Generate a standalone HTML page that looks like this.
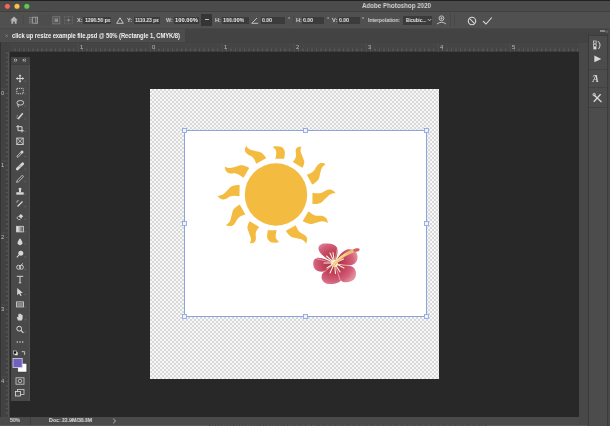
<!DOCTYPE html>
<html><head><meta charset="utf-8"><style>
*{margin:0;padding:0;box-sizing:border-box}
html,body{width:610px;height:426px;overflow:hidden;background:#282828;font-family:"Liberation Sans",sans-serif;position:relative}
.a{position:absolute}
.t{position:absolute;white-space:nowrap;line-height:1;color:#dcdcdc;transform-origin:0 0;will-change:transform}
.f{position:absolute;background:#3d3d3d;height:7px;top:16.5px}
svg{position:absolute;overflow:visible}
#w{position:absolute;left:0;top:0;width:610px;height:426px;overflow:hidden}</style></head><body><div id="w">
<div class="a" style="left:0px;top:0px;width:610px;height:426px;background:#282828;"></div>
<div class="a" style="left:0px;top:0px;width:610px;height:1px;background:#222222;"></div>
<div class="a" style="left:0px;top:1px;width:610px;height:10px;background:#4b4b4b;"></div>
<div class="a" style="left:0px;top:11px;width:610px;height:1px;background:#404040;"></div>
<div class="a" style="left:0px;top:12px;width:610px;height:16px;background:#505050;"></div>
<div class="a" style="left:0px;top:28px;width:610px;height:1px;background:#484848;"></div>
<div class="a" style="left:0px;top:29px;width:610px;height:13px;background:#434343;"></div>
<div class="a" style="left:0px;top:29px;width:185px;height:13px;background:#4d4d4d;"></div>
<div class="a" style="left:0px;top:42px;width:610px;height:1px;background:#424242;"></div>
<div class="a" style="left:10px;top:43px;width:569px;height:9px;background:#454545;"></div>
<div class="a" style="left:0px;top:43px;width:10px;height:374px;background:#424242;"></div>
<div class="a" style="left:8px;top:52px;width:1.2px;height:365px;background:#545454;"></div>
<div class="a" style="left:0px;top:42px;width:1px;height:384px;background:#333333;"></div>
<div class="a" style="left:9px;top:52px;width:1px;height:365px;background:#3c3c3c;"></div>
<div class="a" style="left:10px;top:51px;width:569px;height:1px;background:#3c3c3c;"></div>
<div class="a" style="left:0px;top:417px;width:588px;height:8px;background:#4a4a4a;"></div>
<div class="a" style="left:0px;top:424.5px;width:610px;height:1.5px;background:#575757;"></div>
<div class="a" style="left:209px;top:424.8px;width:278px;height:1.2px;background:#575757;background:repeating-linear-gradient(90deg,#3a3a3a 0 1px,#575757 1px 2.5px,#454545 2.5px 3.5px,#575757 3.5px 6px);opacity:.9"></div>
<div class="a" style="left:579px;top:43px;width:9px;height:382px;background:#484848;"></div>
<div class="a" style="left:588px;top:34px;width:1px;height:392px;background:#3a3a3a;"></div>
<div class="a" style="left:589px;top:35px;width:18px;height:391px;background:#4c4c4c;"></div>
<div class="a" style="left:607px;top:34px;width:1px;height:392px;background:#3c3c3c;"></div>
<div class="a" style="left:608px;top:29px;width:2px;height:397px;background:#484848;"></div>
<svg style="left:0;top:0" width="40" height="12"><circle cx="7.4" cy="6.3" r="2.9" fill="#ee6a5c" stroke="#3e3434" stroke-width="0.5"/><circle cx="17" cy="6.3" r="2.9" fill="#f5c34f" stroke="#3e3a30" stroke-width="0.5"/><circle cx="26.8" cy="6.3" r="2.9" fill="#63c656" stroke="#30402f" stroke-width="0.5"/></svg>
<div class="t" style="left:362px;top:2.8px;font-size:6.6px;color:#d2d2d2;font-weight:bold;transform:scale(0.942,1.0);">Adobe Photoshop 2020</div>
<svg style="left:9px;top:15px" width="10" height="10" viewBox="0 0 10 10"><path d="M1.2,5.2 L5,1.5 L8.8,5.2 H7.6 V8.8 H5.8 V6.4 H4.2 V8.8 H2.4 V5.2 Z" fill="#b4b4b4"/></svg>
<div class="a" style="left:23px;top:15px;width:1px;height:10px;background:#4a4a4a;"></div>
<svg style="left:29px;top:16px" width="10" height="9" viewBox="0 0 10 9"><path d="M0.8,1 V7.5 M2.2,1 V7.5" stroke="#a8a8a8" stroke-width="0.7" stroke-dasharray="1 0.8"/><rect x="3.6" y="1.2" width="5" height="6" fill="none" stroke="#a8a8a8" stroke-width="0.8"/><path d="M6.8,1.2 V7.2" stroke="#a8a8a8" stroke-width="0.8"/></svg>
<div class="a" style="left:38px;top:14px;width:14px;height:12px;background:#4d4d4d;"></div>
<svg style="left:52px;top:16px" width="24" height="9" viewBox="0 0 24 9"><rect x="0.8" y="0.8" width="7" height="7" fill="none" stroke="#7e7e7e" stroke-width="0.8"/><rect x="2.5" y="2.5" width="3.6" height="3.6" fill="#8c8c8c"/><path d="M12.5,0.6 H20.5 M12.5,4.2 H20.5 M12.5,7.8 H20.5 M12.5,0.6 V7.8 M16.5,0.6 V7.8 M20.5,0.6 V7.8" stroke="#747474" stroke-width="0.7" stroke-dasharray="1 0.9"/><rect x="15.6" y="3.3" width="1.8" height="1.8" fill="#9a9a9a"/></svg>
<div class="t" style="left:77px;top:17.9px;font-size:5.6px;color:#d0d0d0;font-weight:bold;transform:scale(0.95,1.0);">X:</div>
<div class="a" style="left:83px;top:16.5px;width:28px;height:7px;background:#3b3b3b;"></div>
<div class="t" style="left:84.5px;top:17.7px;font-size:5.8px;color:#eeeeee;font-weight:bold;transform:scale(0.87,1.0);">1290.50 px</div>
<svg style="left:116px;top:16.5px" width="8" height="7" viewBox="0 0 8 7"><path d="M4,0.8 L7.3,6.3 H0.7 Z" fill="none" stroke="#cfcfcf" stroke-width="0.9"/></svg>
<div class="t" style="left:127px;top:17.9px;font-size:5.6px;color:#d0d0d0;font-weight:bold;transform:scale(0.95,1.0);">Y:</div>
<div class="a" style="left:134px;top:16.5px;width:26px;height:7px;background:#3b3b3b;"></div>
<div class="t" style="left:135.3px;top:17.7px;font-size:5.8px;color:#eeeeee;font-weight:bold;transform:scale(0.83,1.0);">1110.23 px</div>
<div class="t" style="left:166px;top:17.9px;font-size:5.6px;color:#d0d0d0;font-weight:bold;transform:scale(0.92,1.0);">W:</div>
<div class="a" style="left:174px;top:16.5px;width:25px;height:7px;background:#3b3b3b;"></div>
<div class="t" style="left:175px;top:17.7px;font-size:5.8px;color:#eeeeee;font-weight:bold;">100.00%</div>
<div class="a" style="left:201px;top:14px;width:11px;height:11.5px;background:#353535;"></div>
<div class="a" style="left:204.5px;top:19.3px;width:4.5px;height:1px;background:#bdbdbd;"></div>
<div class="t" style="left:214.5px;top:17.9px;font-size:5.6px;color:#d0d0d0;font-weight:bold;transform:scale(0.95,1.0);">H:</div>
<div class="a" style="left:222px;top:16.5px;width:27px;height:7px;background:#3b3b3b;"></div>
<div class="t" style="left:223px;top:17.7px;font-size:5.8px;color:#eeeeee;font-weight:bold;transform:scale(0.93,1.0);">100.00%</div>
<svg style="left:251px;top:16.5px" width="8" height="7" viewBox="0 0 8 7"><path d="M0.8,6.3 H7.2 M0.8,6.3 L6,1" fill="none" stroke="#cfcfcf" stroke-width="0.9"/></svg>
<div class="a" style="left:261px;top:16.5px;width:24px;height:7px;background:#3b3b3b;"></div>
<div class="t" style="left:262px;top:17.7px;font-size:5.8px;color:#eeeeee;font-weight:bold;transform:scale(0.885,1.0);">0.00</div>
<div class="t" style="left:287.5px;top:16.8px;font-size:5.6px;color:#cfcfcf;font-weight:normal;">°</div>
<div class="a" style="left:293px;top:15px;width:1px;height:10px;background:#474747;"></div>
<div class="t" style="left:296px;top:17.9px;font-size:5.6px;color:#d0d0d0;font-weight:bold;transform:scale(0.95,1.0);">H:</div>
<div class="a" style="left:302px;top:16.5px;width:22px;height:7px;background:#3b3b3b;"></div>
<div class="t" style="left:303px;top:17.7px;font-size:5.8px;color:#eeeeee;font-weight:bold;transform:scale(0.885,1.0);">0.00</div>
<div class="t" style="left:326.5px;top:16.8px;font-size:5.6px;color:#cfcfcf;font-weight:normal;">°</div>
<div class="t" style="left:332px;top:17.9px;font-size:5.6px;color:#d0d0d0;font-weight:bold;transform:scale(0.95,1.0);">V:</div>
<div class="a" style="left:338px;top:16.5px;width:22px;height:7px;background:#3b3b3b;"></div>
<div class="t" style="left:339px;top:17.7px;font-size:5.8px;color:#eeeeee;font-weight:bold;transform:scale(0.885,1.0);">0.00</div>
<div class="t" style="left:361.5px;top:16.8px;font-size:5.6px;color:#cfcfcf;font-weight:normal;">°</div>
<div class="t" style="left:368px;top:17.9px;font-size:5.8px;color:#d4d4d4;font-weight:bold;transform:scale(0.864,1.0);">Interpolation:</div>
<div class="a" style="left:403px;top:15.5px;width:29px;height:9px;background:#3b3b3b;"></div>
<div class="t" style="left:406px;top:17.9px;font-size:5.8px;color:#e4e4e4;font-weight:bold;transform:scale(0.78,1.0);">Bicubic...</div>
<svg style="left:427px;top:18px" width="5" height="4" viewBox="0 0 5 4"><path d="M0.8,1 L2.5,2.8 L4.2,1" fill="none" stroke="#cfcfcf" stroke-width="0.8"/></svg>
<svg style="left:436px;top:15px" width="11" height="10" viewBox="0 0 11 10"><circle cx="5.5" cy="3.3" r="2.4" fill="none" stroke="#cfcfcf" stroke-width="0.9"/><path d="M4.2,3.3 H6.8 M5.5,2 V4.6" stroke="#cfcfcf" stroke-width="0.7"/><path d="M1,9 Q5.5,5.5 10,9" fill="none" stroke="#cfcfcf" stroke-width="0.9"/></svg>
<div class="a" style="left:450px;top:14px;width:1px;height:12px;background:#474747;"></div>
<div class="a" style="left:454px;top:14px;width:1px;height:12px;background:#474747;"></div>
<svg style="left:467px;top:15.5px" width="10" height="10" viewBox="0 0 10 10"><circle cx="5" cy="5" r="3.7" fill="none" stroke="#d8d8d8" stroke-width="1.1"/><path d="M2.4,2.4 L7.6,7.6" stroke="#d8d8d8" stroke-width="1.1"/></svg>
<svg style="left:482px;top:15.5px" width="11" height="10" viewBox="0 0 11 10"><path d="M1,5.2 L4,8 L9.8,1.5" fill="none" stroke="#d8d8d8" stroke-width="1.1"/></svg>
<svg style="left:3.5px;top:33px" width="6" height="6" viewBox="0 0 6 6"><path d="M1.5,1.5 L3.8,3.8 M3.8,1.5 L1.5,3.8" stroke="#8c8c8c" stroke-width="0.7"/></svg>
<div class="t" style="left:12px;top:32.9px;font-size:5.9px;color:#eeeeee;font-weight:bold;transform:scale(1.0,1.17);letter-spacing:-0.08px;">click up resize example file.psd @ 50% (Rectangle 1, CMYK/8)</div>
<svg style="left:0;top:0" width="610" height="426"><rect x="14.5" y="48.6" width="1" height="2.6" fill="#606060"/><rect x="19.0" y="48.6" width="1" height="2.6" fill="#5a5a5a"/><rect x="23.5" y="48.6" width="1" height="2.6" fill="#606060"/><rect x="28.0" y="48.6" width="1" height="2.6" fill="#5a5a5a"/><rect x="32.5" y="48.6" width="1" height="2.6" fill="#606060"/><rect x="37.0" y="48.6" width="1" height="2.6" fill="#5a5a5a"/><rect x="41.5" y="48.6" width="1" height="2.6" fill="#606060"/><rect x="46.0" y="48.6" width="1" height="2.6" fill="#5a5a5a"/><rect x="50.5" y="48.6" width="1" height="2.6" fill="#606060"/><rect x="55.0" y="48.6" width="1" height="2.6" fill="#5a5a5a"/><rect x="59.5" y="48.6" width="1" height="2.6" fill="#606060"/><rect x="64.0" y="48.6" width="1" height="2.6" fill="#5a5a5a"/><rect x="68.5" y="48.6" width="1" height="2.6" fill="#606060"/><rect x="73.0" y="48.6" width="1" height="2.6" fill="#5a5a5a"/><rect x="77.5" y="43" width="1" height="9" fill="#4e4e4e"/><rect x="82.0" y="48.6" width="1" height="2.6" fill="#5a5a5a"/><rect x="86.5" y="48.6" width="1" height="2.6" fill="#606060"/><rect x="91.0" y="48.6" width="1" height="2.6" fill="#5a5a5a"/><rect x="95.5" y="48.6" width="1" height="2.6" fill="#606060"/><rect x="100.0" y="48.6" width="1" height="2.6" fill="#5a5a5a"/><rect x="104.5" y="48.6" width="1" height="2.6" fill="#606060"/><rect x="109.0" y="48.6" width="1" height="2.6" fill="#5a5a5a"/><rect x="113.5" y="48.6" width="1" height="2.6" fill="#606060"/><rect x="118.0" y="48.6" width="1" height="2.6" fill="#5a5a5a"/><rect x="122.5" y="48.6" width="1" height="2.6" fill="#606060"/><rect x="127.0" y="48.6" width="1" height="2.6" fill="#5a5a5a"/><rect x="131.5" y="48.6" width="1" height="2.6" fill="#606060"/><rect x="136.0" y="48.6" width="1" height="2.6" fill="#5a5a5a"/><rect x="140.5" y="48.6" width="1" height="2.6" fill="#606060"/><rect x="145.0" y="48.6" width="1" height="2.6" fill="#5a5a5a"/><rect x="149.5" y="43" width="1" height="9" fill="#4e4e4e"/><rect x="154.0" y="48.6" width="1" height="2.6" fill="#5a5a5a"/><rect x="158.5" y="48.6" width="1" height="2.6" fill="#606060"/><rect x="163.0" y="48.6" width="1" height="2.6" fill="#5a5a5a"/><rect x="167.5" y="48.6" width="1" height="2.6" fill="#606060"/><rect x="172.0" y="48.6" width="1" height="2.6" fill="#5a5a5a"/><rect x="176.5" y="48.6" width="1" height="2.6" fill="#606060"/><rect x="181.0" y="48.6" width="1" height="2.6" fill="#5a5a5a"/><rect x="185.5" y="48.6" width="1" height="2.6" fill="#606060"/><rect x="190.0" y="48.6" width="1" height="2.6" fill="#5a5a5a"/><rect x="194.5" y="48.6" width="1" height="2.6" fill="#606060"/><rect x="199.0" y="48.6" width="1" height="2.6" fill="#5a5a5a"/><rect x="203.5" y="48.6" width="1" height="2.6" fill="#606060"/><rect x="208.0" y="48.6" width="1" height="2.6" fill="#5a5a5a"/><rect x="212.5" y="48.6" width="1" height="2.6" fill="#606060"/><rect x="217.0" y="48.6" width="1" height="2.6" fill="#5a5a5a"/><rect x="221.5" y="43" width="1" height="9" fill="#4e4e4e"/><rect x="226.0" y="48.6" width="1" height="2.6" fill="#5a5a5a"/><rect x="230.5" y="48.6" width="1" height="2.6" fill="#606060"/><rect x="235.0" y="48.6" width="1" height="2.6" fill="#5a5a5a"/><rect x="239.5" y="48.6" width="1" height="2.6" fill="#606060"/><rect x="244.0" y="48.6" width="1" height="2.6" fill="#5a5a5a"/><rect x="248.5" y="48.6" width="1" height="2.6" fill="#606060"/><rect x="253.0" y="48.6" width="1" height="2.6" fill="#5a5a5a"/><rect x="257.5" y="48.6" width="1" height="2.6" fill="#606060"/><rect x="262.0" y="48.6" width="1" height="2.6" fill="#5a5a5a"/><rect x="266.5" y="48.6" width="1" height="2.6" fill="#606060"/><rect x="271.0" y="48.6" width="1" height="2.6" fill="#5a5a5a"/><rect x="275.5" y="48.6" width="1" height="2.6" fill="#606060"/><rect x="280.0" y="48.6" width="1" height="2.6" fill="#5a5a5a"/><rect x="284.5" y="48.6" width="1" height="2.6" fill="#606060"/><rect x="289.0" y="48.6" width="1" height="2.6" fill="#5a5a5a"/><rect x="293.5" y="43" width="1" height="9" fill="#4e4e4e"/><rect x="298.0" y="48.6" width="1" height="2.6" fill="#5a5a5a"/><rect x="302.5" y="48.6" width="1" height="2.6" fill="#606060"/><rect x="307.0" y="48.6" width="1" height="2.6" fill="#5a5a5a"/><rect x="311.5" y="48.6" width="1" height="2.6" fill="#606060"/><rect x="316.0" y="48.6" width="1" height="2.6" fill="#5a5a5a"/><rect x="320.5" y="48.6" width="1" height="2.6" fill="#606060"/><rect x="325.0" y="48.6" width="1" height="2.6" fill="#5a5a5a"/><rect x="329.5" y="48.6" width="1" height="2.6" fill="#606060"/><rect x="334.0" y="48.6" width="1" height="2.6" fill="#5a5a5a"/><rect x="338.5" y="48.6" width="1" height="2.6" fill="#606060"/><rect x="343.0" y="48.6" width="1" height="2.6" fill="#5a5a5a"/><rect x="347.5" y="48.6" width="1" height="2.6" fill="#606060"/><rect x="352.0" y="48.6" width="1" height="2.6" fill="#5a5a5a"/><rect x="356.5" y="48.6" width="1" height="2.6" fill="#606060"/><rect x="361.0" y="48.6" width="1" height="2.6" fill="#5a5a5a"/><rect x="365.5" y="43" width="1" height="9" fill="#4e4e4e"/><rect x="370.0" y="48.6" width="1" height="2.6" fill="#5a5a5a"/><rect x="374.5" y="48.6" width="1" height="2.6" fill="#606060"/><rect x="379.0" y="48.6" width="1" height="2.6" fill="#5a5a5a"/><rect x="383.5" y="48.6" width="1" height="2.6" fill="#606060"/><rect x="388.0" y="48.6" width="1" height="2.6" fill="#5a5a5a"/><rect x="392.5" y="48.6" width="1" height="2.6" fill="#606060"/><rect x="397.0" y="48.6" width="1" height="2.6" fill="#5a5a5a"/><rect x="401.5" y="48.6" width="1" height="2.6" fill="#606060"/><rect x="406.0" y="48.6" width="1" height="2.6" fill="#5a5a5a"/><rect x="410.5" y="48.6" width="1" height="2.6" fill="#606060"/><rect x="415.0" y="48.6" width="1" height="2.6" fill="#5a5a5a"/><rect x="419.5" y="48.6" width="1" height="2.6" fill="#606060"/><rect x="424.0" y="48.6" width="1" height="2.6" fill="#5a5a5a"/><rect x="428.5" y="48.6" width="1" height="2.6" fill="#606060"/><rect x="433.0" y="48.6" width="1" height="2.6" fill="#5a5a5a"/><rect x="437.5" y="43" width="1" height="9" fill="#4e4e4e"/><rect x="442.0" y="48.6" width="1" height="2.6" fill="#5a5a5a"/><rect x="446.5" y="48.6" width="1" height="2.6" fill="#606060"/><rect x="451.0" y="48.6" width="1" height="2.6" fill="#5a5a5a"/><rect x="455.5" y="48.6" width="1" height="2.6" fill="#606060"/><rect x="460.0" y="48.6" width="1" height="2.6" fill="#5a5a5a"/><rect x="464.5" y="48.6" width="1" height="2.6" fill="#606060"/><rect x="469.0" y="48.6" width="1" height="2.6" fill="#5a5a5a"/><rect x="473.5" y="48.6" width="1" height="2.6" fill="#606060"/><rect x="478.0" y="48.6" width="1" height="2.6" fill="#5a5a5a"/><rect x="482.5" y="48.6" width="1" height="2.6" fill="#606060"/><rect x="487.0" y="48.6" width="1" height="2.6" fill="#5a5a5a"/><rect x="491.5" y="48.6" width="1" height="2.6" fill="#606060"/><rect x="496.0" y="48.6" width="1" height="2.6" fill="#5a5a5a"/><rect x="500.5" y="48.6" width="1" height="2.6" fill="#606060"/><rect x="505.0" y="48.6" width="1" height="2.6" fill="#5a5a5a"/><rect x="509.5" y="43" width="1" height="9" fill="#4e4e4e"/><rect x="514.0" y="48.6" width="1" height="2.6" fill="#5a5a5a"/><rect x="518.5" y="48.6" width="1" height="2.6" fill="#606060"/><rect x="523.0" y="48.6" width="1" height="2.6" fill="#5a5a5a"/><rect x="527.5" y="48.6" width="1" height="2.6" fill="#606060"/><rect x="532.0" y="48.6" width="1" height="2.6" fill="#5a5a5a"/><rect x="536.5" y="48.6" width="1" height="2.6" fill="#606060"/><rect x="541.0" y="48.6" width="1" height="2.6" fill="#5a5a5a"/><rect x="545.5" y="48.6" width="1" height="2.6" fill="#606060"/><rect x="550.0" y="48.6" width="1" height="2.6" fill="#5a5a5a"/><rect x="554.5" y="48.6" width="1" height="2.6" fill="#606060"/><rect x="559.0" y="48.6" width="1" height="2.6" fill="#5a5a5a"/><rect x="563.5" y="48.6" width="1" height="2.6" fill="#606060"/><rect x="568.0" y="48.6" width="1" height="2.6" fill="#5a5a5a"/><rect x="572.5" y="48.6" width="1" height="2.6" fill="#606060"/><rect x="577.0" y="48.6" width="1" height="2.6" fill="#5a5a5a"/><rect x="5.8" y="52.5" width="2.4" height="1" fill="#5c5c5c"/><rect x="5.8" y="57.0" width="2.4" height="1" fill="#565656"/><rect x="5.8" y="61.5" width="2.4" height="1" fill="#5c5c5c"/><rect x="5.8" y="66.0" width="2.4" height="1" fill="#565656"/><rect x="5.8" y="70.5" width="2.4" height="1" fill="#5c5c5c"/><rect x="5.8" y="75.0" width="2.4" height="1" fill="#565656"/><rect x="5.8" y="79.5" width="2.4" height="1" fill="#5c5c5c"/><rect x="5.8" y="84.0" width="2.4" height="1" fill="#565656"/><rect x="1" y="88.5" width="8" height="1" fill="#4e4e4e"/><rect x="5.8" y="93.0" width="2.4" height="1" fill="#565656"/><rect x="5.8" y="97.5" width="2.4" height="1" fill="#5c5c5c"/><rect x="5.8" y="102.0" width="2.4" height="1" fill="#565656"/><rect x="5.8" y="106.5" width="2.4" height="1" fill="#5c5c5c"/><rect x="5.8" y="111.0" width="2.4" height="1" fill="#565656"/><rect x="5.8" y="115.5" width="2.4" height="1" fill="#5c5c5c"/><rect x="5.8" y="120.0" width="2.4" height="1" fill="#565656"/><rect x="5.8" y="124.5" width="2.4" height="1" fill="#5c5c5c"/><rect x="5.8" y="129.0" width="2.4" height="1" fill="#565656"/><rect x="5.8" y="133.5" width="2.4" height="1" fill="#5c5c5c"/><rect x="5.8" y="138.0" width="2.4" height="1" fill="#565656"/><rect x="5.8" y="142.5" width="2.4" height="1" fill="#5c5c5c"/><rect x="5.8" y="147.0" width="2.4" height="1" fill="#565656"/><rect x="5.8" y="151.5" width="2.4" height="1" fill="#5c5c5c"/><rect x="5.8" y="156.0" width="2.4" height="1" fill="#565656"/><rect x="1" y="160.5" width="8" height="1" fill="#4e4e4e"/><rect x="5.8" y="165.0" width="2.4" height="1" fill="#565656"/><rect x="5.8" y="169.5" width="2.4" height="1" fill="#5c5c5c"/><rect x="5.8" y="174.0" width="2.4" height="1" fill="#565656"/><rect x="5.8" y="178.5" width="2.4" height="1" fill="#5c5c5c"/><rect x="5.8" y="183.0" width="2.4" height="1" fill="#565656"/><rect x="5.8" y="187.5" width="2.4" height="1" fill="#5c5c5c"/><rect x="5.8" y="192.0" width="2.4" height="1" fill="#565656"/><rect x="5.8" y="196.5" width="2.4" height="1" fill="#5c5c5c"/><rect x="5.8" y="201.0" width="2.4" height="1" fill="#565656"/><rect x="5.8" y="205.5" width="2.4" height="1" fill="#5c5c5c"/><rect x="5.8" y="210.0" width="2.4" height="1" fill="#565656"/><rect x="5.8" y="214.5" width="2.4" height="1" fill="#5c5c5c"/><rect x="5.8" y="219.0" width="2.4" height="1" fill="#565656"/><rect x="5.8" y="223.5" width="2.4" height="1" fill="#5c5c5c"/><rect x="5.8" y="228.0" width="2.4" height="1" fill="#565656"/><rect x="1" y="232.5" width="8" height="1" fill="#4e4e4e"/><rect x="5.8" y="237.0" width="2.4" height="1" fill="#565656"/><rect x="5.8" y="241.5" width="2.4" height="1" fill="#5c5c5c"/><rect x="5.8" y="246.0" width="2.4" height="1" fill="#565656"/><rect x="5.8" y="250.5" width="2.4" height="1" fill="#5c5c5c"/><rect x="5.8" y="255.0" width="2.4" height="1" fill="#565656"/><rect x="5.8" y="259.5" width="2.4" height="1" fill="#5c5c5c"/><rect x="5.8" y="264.0" width="2.4" height="1" fill="#565656"/><rect x="5.8" y="268.5" width="2.4" height="1" fill="#5c5c5c"/><rect x="5.8" y="273.0" width="2.4" height="1" fill="#565656"/><rect x="5.8" y="277.5" width="2.4" height="1" fill="#5c5c5c"/><rect x="5.8" y="282.0" width="2.4" height="1" fill="#565656"/><rect x="5.8" y="286.5" width="2.4" height="1" fill="#5c5c5c"/><rect x="5.8" y="291.0" width="2.4" height="1" fill="#565656"/><rect x="5.8" y="295.5" width="2.4" height="1" fill="#5c5c5c"/><rect x="5.8" y="300.0" width="2.4" height="1" fill="#565656"/><rect x="1" y="304.5" width="8" height="1" fill="#4e4e4e"/><rect x="5.8" y="309.0" width="2.4" height="1" fill="#565656"/><rect x="5.8" y="313.5" width="2.4" height="1" fill="#5c5c5c"/><rect x="5.8" y="318.0" width="2.4" height="1" fill="#565656"/><rect x="5.8" y="322.5" width="2.4" height="1" fill="#5c5c5c"/><rect x="5.8" y="327.0" width="2.4" height="1" fill="#565656"/><rect x="5.8" y="331.5" width="2.4" height="1" fill="#5c5c5c"/><rect x="5.8" y="336.0" width="2.4" height="1" fill="#565656"/><rect x="5.8" y="340.5" width="2.4" height="1" fill="#5c5c5c"/><rect x="5.8" y="345.0" width="2.4" height="1" fill="#565656"/><rect x="5.8" y="349.5" width="2.4" height="1" fill="#5c5c5c"/><rect x="5.8" y="354.0" width="2.4" height="1" fill="#565656"/><rect x="5.8" y="358.5" width="2.4" height="1" fill="#5c5c5c"/><rect x="5.8" y="363.0" width="2.4" height="1" fill="#565656"/><rect x="5.8" y="367.5" width="2.4" height="1" fill="#5c5c5c"/><rect x="5.8" y="372.0" width="2.4" height="1" fill="#565656"/><rect x="1" y="376.5" width="8" height="1" fill="#4e4e4e"/><rect x="5.8" y="381.0" width="2.4" height="1" fill="#565656"/><rect x="5.8" y="385.5" width="2.4" height="1" fill="#5c5c5c"/><rect x="5.8" y="390.0" width="2.4" height="1" fill="#565656"/><rect x="5.8" y="394.5" width="2.4" height="1" fill="#5c5c5c"/><rect x="5.8" y="399.0" width="2.4" height="1" fill="#565656"/><rect x="5.8" y="403.5" width="2.4" height="1" fill="#5c5c5c"/><rect x="5.8" y="408.0" width="2.4" height="1" fill="#565656"/><rect x="5.8" y="412.5" width="2.4" height="1" fill="#5c5c5c"/></svg>
<div class="t" style="left:79.5px;top:45px;font-size:5.8px;color:#bdbdbd;font-weight:normal;">1</div>
<div class="t" style="left:151.5px;top:45px;font-size:5.8px;color:#bdbdbd;font-weight:normal;">0</div>
<div class="t" style="left:223.5px;top:45px;font-size:5.8px;color:#bdbdbd;font-weight:normal;">1</div>
<div class="t" style="left:295.5px;top:45px;font-size:5.8px;color:#bdbdbd;font-weight:normal;">2</div>
<div class="t" style="left:367.5px;top:45px;font-size:5.8px;color:#bdbdbd;font-weight:normal;">3</div>
<div class="t" style="left:439.5px;top:45px;font-size:5.8px;color:#bdbdbd;font-weight:normal;">4</div>
<div class="t" style="left:511.5px;top:45px;font-size:5.8px;color:#bdbdbd;font-weight:normal;">5</div>
<div class="t" style="left:1.4px;top:90.8px;font-size:5.8px;color:#bdbdbd;font-weight:normal;">0</div>
<div class="t" style="left:1.4px;top:162.8px;font-size:5.8px;color:#bdbdbd;font-weight:normal;">1</div>
<div class="t" style="left:1.4px;top:234.8px;font-size:5.8px;color:#bdbdbd;font-weight:normal;">2</div>
<div class="t" style="left:1.4px;top:306.8px;font-size:5.8px;color:#bdbdbd;font-weight:normal;">3</div>
<div class="t" style="left:1.4px;top:378.8px;font-size:5.8px;color:#bdbdbd;font-weight:normal;">4</div>
<div class="a" style="left:10.5px;top:57px;width:19px;height:344px;background:#494949;"></div>
<div class="a" style="left:28.6px;top:64px;width:0.9px;height:337px;background:#525252;"></div>
<div class="a" style="left:10.5px;top:57px;width:19px;height:7px;background:#424242;"></div>
<div class="a" style="left:10.5px;top:63.5px;width:19px;height:0.8px;background:#3e3e3e;"></div>
<svg style="left:10px;top:57px" width="20" height="7" viewBox="0 0 20 7"><path d="M3.8,1.8 L5.3,3.2 L3.8,4.6 M5.6,1.8 L7.1,3.2 L5.6,4.6" fill="none" stroke="#d4d4d4" stroke-width="0.8"/><path d="M14.2,1.8 L12.7,3.2 L14.2,4.6 M16,1.8 L14.5,3.2 L16,4.6" fill="none" stroke="#d4d4d4" stroke-width="0.8"/></svg>
<svg style="left:0;top:0" width="610" height="426"><g transform="translate(16,74.50)"><path d="M4,0.3 V7.7 M0.3,4 H7.7" stroke="#d6d6d6" stroke-width="1"/><path d="M4,0 L2.5,1.8 H5.5Z M4,8 L2.5,6.2 H5.5Z M0,4 L1.8,2.5 V5.5Z M8,4 L6.2,2.5 V5.5Z" fill="#d6d6d6"/></g><path d="M25.8,81.70 L25.8,80.10 L24.2,81.70 Z" fill="#6e6e6e"/><g transform="translate(16,87.05)"><rect x="0.8" y="1.3" width="6.4" height="5.4" fill="none" stroke="#d6d6d6" stroke-width="0.9" stroke-dasharray="1.2 0.8"/></g><path d="M25.8,94.25 L25.8,92.65 L24.2,94.25 Z" fill="#6e6e6e"/><g transform="translate(16,99.60)"><ellipse cx="4.3" cy="3.2" rx="3.4" ry="2.3" fill="none" stroke="#d6d6d6" stroke-width="0.9"/><path d="M1.8,4.8 Q1.5,7 3,7.6" fill="none" stroke="#d6d6d6" stroke-width="0.9"/></g><path d="M25.8,106.80 L25.8,105.20 L24.2,106.80 Z" fill="#6e6e6e"/><g transform="translate(16,112.15)"><path d="M2,6.8 L6.8,1.2" stroke="#d6d6d6" stroke-width="1.6"/><path d="M1.5,3 Q0.3,5.5 2,7.3" fill="none" stroke="#d6d6d6" stroke-width="0.7" stroke-dasharray="0.9 0.6"/></g><path d="M25.8,119.35 L25.8,117.75 L24.2,119.35 Z" fill="#6e6e6e"/><g transform="translate(16,124.70)"><path d="M2,0.3 V6 H7.7 M0.3,2 H6 V7.7" fill="none" stroke="#d6d6d6" stroke-width="1"/></g><path d="M25.8,131.90 L25.8,130.30 L24.2,131.90 Z" fill="#6e6e6e"/><g transform="translate(16,137.25)"><rect x="0.8" y="0.8" width="6.4" height="6.4" fill="none" stroke="#d6d6d6" stroke-width="0.9"/><path d="M0.8,0.8 L7.2,7.2 M7.2,0.8 L0.8,7.2" stroke="#d6d6d6" stroke-width="0.8"/></g><g transform="translate(16,149.80)"><path d="M1.2,7.2 L0.9,6.4 L4.3,3 L5.4,4.1 L2,7.5 Z" fill="none" stroke="#d6d6d6" stroke-width="0.8"/><path d="M4,2.4 L6,0.5 L7.8,2.2 L5.9,4.3 Z" fill="#d6d6d6"/></g><path d="M25.8,157.00 L25.8,155.40 L24.2,157.00 Z" fill="#6e6e6e"/><g transform="translate(16,162.35)"><path d="M1.3,6.7 L6.7,1.3" stroke="#d6d6d6" stroke-width="2.8" stroke-linecap="round"/><path d="M3,4 L4,5 M4,3 L5,4" stroke="#4e4e4e" stroke-width="0.6"/></g><path d="M25.8,169.55 L25.8,167.95 L24.2,169.55 Z" fill="#6e6e6e"/><g transform="translate(16,174.90)"><path d="M0.6,7.4 L1.2,5.4 L5.8,0.9 Q6.8,0.4 7.2,1 Q7.6,1.6 7,2.4 L2.5,6.8 Z" fill="none" stroke="#d6d6d6" stroke-width="0.8"/></g><path d="M25.8,182.10 L25.8,180.50 L24.2,182.10 Z" fill="#6e6e6e"/><g transform="translate(16,187.45)"><rect x="0.3" y="4.8" width="7.4" height="2.4" fill="#d6d6d6"/><rect x="3" y="2.5" width="2" height="2.5" fill="#d6d6d6"/><circle cx="4" cy="1.6" r="1.4" fill="#d6d6d6"/></g><path d="M25.8,194.65 L25.8,193.05 L24.2,194.65 Z" fill="#6e6e6e"/><g transform="translate(16,200.00)"><path d="M1.5,6.5 L6.5,1.5" stroke="#d6d6d6" stroke-width="1.3"/><path d="M0.8,2.5 Q0.5,0.5 2.6,0.6" fill="none" stroke="#d6d6d6" stroke-width="0.8"/></g><path d="M25.8,207.20 L25.8,205.60 L24.2,207.20 Z" fill="#6e6e6e"/><g transform="translate(16,212.55)"><path d="M2.6,3.6 L4.8,1.4 L7.2,3.8 L5,6 Z" fill="#d6d6d6"/><path d="M2.6,3.6 L0.8,5.4 L2.4,7 H4 L5,6" fill="none" stroke="#d6d6d6" stroke-width="0.8"/></g><path d="M25.8,219.75 L25.8,218.15 L24.2,219.75 Z" fill="#6e6e6e"/><g transform="translate(16,225.10)"><defs><linearGradient id="gr"><stop offset="0" stop-color="#f0f0f0"/><stop offset="1" stop-color="#505050"/></linearGradient></defs><rect x="0.6" y="1.2" width="6.8" height="5.6" fill="url(#gr)" stroke="#d6d6d6" stroke-width="0.8"/></g><path d="M25.8,232.30 L25.8,230.70 L24.2,232.30 Z" fill="#6e6e6e"/><g transform="translate(16,237.65)"><path d="M4,0.6 Q1,4.5 1.6,5.8 Q2.5,7.6 4,7.6 Q5.5,7.6 6.4,5.8 Q7,4.5 4,0.6Z" fill="#d6d6d6"/></g><path d="M25.8,244.85 L25.8,243.25 L24.2,244.85 Z" fill="#6e6e6e"/><g transform="translate(16,250.20)"><circle cx="4.8" cy="3" r="2.5" fill="#d6d6d6"/><path d="M3,4.8 L0.8,7.2" stroke="#d6d6d6" stroke-width="1.1"/></g><path d="M25.8,257.40 L25.8,255.80 L24.2,257.40 Z" fill="#6e6e6e"/><g transform="translate(16,262.75)"><circle cx="2.6" cy="4.5" r="2" fill="none" stroke="#d6d6d6" stroke-width="0.9"/><circle cx="5.4" cy="4.5" r="2" fill="none" stroke="#d6d6d6" stroke-width="0.9"/><path d="M5,2.5 L7,0.6" stroke="#d6d6d6" stroke-width="0.9"/></g><path d="M25.8,269.95 L25.8,268.35 L24.2,269.95 Z" fill="#6e6e6e"/><g transform="translate(16,275.30)"><path d="M0.8,1 H7.2 M4,1 V7.5 M2.8,7.5 H5.2" stroke="#d6d6d6" stroke-width="1"/></g><g transform="translate(16,287.85)"><path d="M1.2,0.2 V7.4 L3,5.7 L4.5,8.2 L5.7,7.6 L4.3,5.2 H6.9 Z" fill="#d6d6d6"/></g><path d="M25.8,295.05 L25.8,293.45 L24.2,295.05 Z" fill="#6e6e6e"/><g transform="translate(16,300.40)"><rect x="0.6" y="1.5" width="6.8" height="5" fill="none" stroke="#d6d6d6" stroke-width="0.9"/><rect x="1.3" y="2.2" width="5.4" height="3.6" fill="#8a8a8a"/></g><path d="M25.8,307.60 L25.8,306.00 L24.2,307.60 Z" fill="#6e6e6e"/><g transform="translate(16,312.95)"><path d="M2,7.6 L0.8,4.2 Q1,3.4 1.8,4 L2.3,4.6 V1.5 Q2.8,0.8 3.3,1.5 V3.6 V0.9 Q3.9,0.3 4.4,0.9 V3.6 V1.3 Q5,0.7 5.5,1.3 V3.8 V2.2 Q6.1,1.6 6.6,2.2 V5.6 L5.8,7.6 Z" fill="#d6d6d6"/></g><path d="M25.8,320.15 L25.8,318.55 L24.2,320.15 Z" fill="#6e6e6e"/><g transform="translate(16,325.50)"><circle cx="3.2" cy="3.2" r="2.4" fill="none" stroke="#d6d6d6" stroke-width="1"/><path d="M4.9,4.9 L7.4,7.4" stroke="#d6d6d6" stroke-width="1.3"/></g><path d="M25.8,332.70 L25.8,331.10 L24.2,332.70 Z" fill="#6e6e6e"/><g transform="translate(16,338.05)"><circle cx="1.3" cy="4" r="0.75" fill="#d6d6d6"/><circle cx="4" cy="4" r="0.75" fill="#d6d6d6"/><circle cx="6.7" cy="4" r="0.75" fill="#d6d6d6"/></g><rect x="14.7" y="352.2" width="3" height="3" fill="#e8e8e8"/><rect x="13.3" y="351" width="3" height="3" fill="#111" stroke="#e8e8e8" stroke-width="0.6"/><path d="M22.2,351.6 H24.6 V354" fill="none" stroke="#d0d0d0" stroke-width="0.8"/><path d="M21.5,351.6 L22.6,350.7 V352.5Z M24.6,354.9 L23.7,353.8 H25.5Z" fill="#d0d0d0"/><rect x="17.8" y="363.4" width="9" height="8.6" fill="#ffffff" stroke="#3a3a3a" stroke-width="0.5"/><rect x="13" y="358.5" width="9.2" height="9" fill="#6f62bd" stroke="#d8d4ee" stroke-width="0.8"/><rect x="16" y="377.8" width="8" height="6.4" fill="none" stroke="#cfcfcf" stroke-width="0.8"/><circle cx="20" cy="381" r="1.8" fill="none" stroke="#cfcfcf" stroke-width="0.8"/><rect x="17.5" y="389.5" width="6.5" height="5" fill="none" stroke="#cfcfcf" stroke-width="0.8"/><rect x="15.5" y="391.5" width="5" height="4.5" fill="#4e4e4e" stroke="#e0e0e0" stroke-width="0.8"/></svg>
<div class="a" style="left:600px;top:30.2px;width:5px;height:1.9px;background:#8a8a8a;"></div>
<svg style="left:600px;top:29.5px" width="9" height="4"><path d="M6.8,0.6 L5.6,1.6 L6.8,2.6 M8.2,0.6 L7,1.6 L8.2,2.6" fill="none" stroke="#8a8a8a" stroke-width="0.6"/></svg>
<div class="a" style="left:589px;top:34.5px;width:18px;height:0.8px;background:#3c3c3c;"></div>
<div class="a" style="left:589px;top:68.5px;width:18px;height:0.8px;background:#424242;"></div>
<div class="a" style="left:589px;top:86.5px;width:18px;height:0.8px;background:#424242;"></div>
<div class="a" style="left:589px;top:107px;width:18px;height:0.8px;background:#424242;"></div>
<svg style="left:0;top:0" width="610" height="426">
<rect x="593.6" y="41" width="2.6" height="2.2" fill="none" stroke="#d8d8d8" stroke-width="0.7"/>
<rect x="593.6" y="44.2" width="2.6" height="2.2" fill="none" stroke="#d8d8d8" stroke-width="0.7"/>
<rect x="593.4" y="47" width="3" height="2.4" fill="#d8d8d8"/>
<path d="M598,41.2 Q601.8,44.5 598.5,49" fill="none" stroke="#d8d8d8" stroke-width="1"/>
<path d="M594.3,55.5 L601.3,59 L594.3,62.3 Z" fill="#d8d8d8"/>
<text x="592.6" y="82.2" font-family="Liberation Serif" font-style="italic" font-weight="bold" font-size="9.5" fill="#d8d8d8">A</text><path d="M592.8,76.5 Q594,74.8 596,75.6" fill="none" stroke="#d8d8d8" stroke-width="0.8"/>
<path d="M593.8,101.8 L600.6,94.2 M593.5,94.5 L601.5,102" stroke="#d8d8d8" stroke-width="1.3"/>
<circle cx="594.2" cy="94.6" r="1.3" fill="none" stroke="#d8d8d8" stroke-width="0.8"/>
</svg>
<div class="t" style="left:10px;top:418.4px;font-size:5.4px;color:#e0e0e0;font-weight:bold;transform:scale(0.93,1.0);">50%</div>
<div class="a" style="left:30px;top:417px;width:1px;height:8px;background:#3f3f3f;"></div>
<div class="t" style="left:49px;top:418.4px;font-size:5.4px;color:#e0e0e0;font-weight:bold;transform:scale(0.957,1.0);">Doc: 22.9M/38.0M</div>
<svg style="left:112px;top:418px" width="5" height="6"><path d="M1.2,0.8 L3.6,3 L1.2,5.2" fill="none" stroke="#cfcfcf" stroke-width="0.8"/></svg>
<div class="a" style="left:150px;top:89px;width:289px;height:290px;background:#ffffff;background:repeating-conic-gradient(#d9d9d9 0 25%,#f7f7f7 0 50%) 0 0/4px 4px;"></div>
<div class="a" style="left:185px;top:131px;width:241px;height:185px;background:#ffffff;"></div>
<svg style="left:0;top:0" width="610" height="426" viewBox="0 0 610 426">
<defs>
<path id="rayS" d="M-1,-4.4 C2,-4 5,-3.6 7,-4.5 C8.5,-5.5 9.5,-7 10.6,-8 C11.6,-5.5 11.8,-2 11.3,0.7 C10,3 8,4.4 5.8,4.5 C3.5,4.6 1.5,4.5 -0.15,4.4 Z"/>
<path id="ray" d="M-0.4,-4.7 C3,-4.6 6,-4.4 9,-5.6 C12,-7.2 14,-9 17,-9 C19.5,-9 21.5,-7.5 22.7,-6.3 C20.5,-6.2 18.5,-5.5 17.2,-4.8 C15,-3.3 13.5,-1 12.6,-0.5 C11,1.5 9.5,3 8,3.4 C5,4.3 2.5,4.8 0.7,4.8 Z"/>
<radialGradient id="pet" gradientUnits="userSpaceOnUse" cx="334" cy="263" r="24">
<stop offset="0" stop-color="#a82a46"/><stop offset="0.45" stop-color="#c2405a"/><stop offset="0.78" stop-color="#d2607a"/><stop offset="1" stop-color="#e48e9c"/>
</radialGradient>
</defs>
<g fill="#f3bb40"><circle cx="276" cy="194.5" r="31.2"/><use href="#rayS" transform="translate(276,194.5) rotate(-84) translate(36.5,0)"/><use href="#ray" transform="translate(276,194.5) rotate(-54) translate(36.5,0) scale(0.758,1.18)"/><use href="#ray" transform="translate(276,194.5) rotate(-24) translate(36.5,0) scale(0.938,1.18)"/><use href="#ray" transform="translate(276,194.5) rotate(6) translate(36.5,0) scale(1.000,1.18)"/><use href="#ray" transform="translate(276,194.5) rotate(36) translate(36.5,0) scale(0.978,1.18)"/><use href="#ray" transform="translate(276,194.5) rotate(66) translate(36.5,0) scale(0.907,1.18)"/><use href="#rayS" transform="translate(276,194.5) rotate(96) translate(36.5,0)"/><use href="#ray" transform="translate(276,194.5) rotate(126) translate(36.5,0) scale(0.811,1.18)"/><use href="#ray" transform="translate(276,194.5) rotate(156) translate(36.5,0) scale(0.956,1.18)"/><use href="#ray" transform="translate(276,194.5) rotate(186) translate(36.5,0) scale(0.947,1.18)"/><use href="#ray" transform="translate(276,194.5) rotate(216) translate(36.5,0) scale(0.947,1.18)"/><use href="#ray" transform="translate(276,194.5) rotate(246) translate(36.5,0) scale(0.885,1.18)"/></g>
<g fill="url(#pet)">
<path d="M333,262 C327,259 319,254 318.5,249 C318,245 322,243 326,243.5 C330,243 335,244 337,247.5 C338.5,251 337,257 335,262 Z"/>
<path d="M335,262 C338,257 342,251 347,249.5 C352,248.5 357,251 357.5,256 C358,261 355,265 350,265.5 C346,266 340,264.5 335,263 Z"/>
<path d="M333.5,263 C328,260.5 321,257 316.5,258 C312.5,259.5 312.5,265 314.5,268.5 C317,272 323,272.5 327,270.5 C330,269 332,266 333.5,263 Z"/>
<path d="M334,264 C330,267 324,270 322,274.5 C320.5,279 323,283 328,284 C333,284.5 338,283.5 341,280.5 C343,277 340,270 335,264 Z"/>
<path d="M335.5,263.5 C340,266 347,264.5 352,266.5 C356,268.5 357,274 355,278 C352.5,282 347,283 343,282 C339,280.5 337,271 335.5,263.5 Z"/>
</g>
<g stroke="#f6e6dc" stroke-linecap="round" fill="none" stroke-width="0.55" opacity="0.95">
<path d="M334.5,263 L337.5,248"/><path d="M334.5,263 L335.5,264 L350,265.6"/><path d="M334,263 L316,258.5"/><path d="M334,264 L324,272"/><path d="M335,264 L340,280"/>
</g>
<g stroke="#fcefd6" stroke-linecap="round" fill="none" stroke-width="1.1">
<path d="M334.5,263 L330,253"/><path d="M334.5,263 L326.5,256"/><path d="M334.5,263 L333,252.5"/>
<path d="M334.5,263 L324,263"/><path d="M334.5,263 L327,268"/>
<path d="M334.5,263 L330,273"/><path d="M334.5,263 L335.5,273.5"/><path d="M334.5,263 L340,272"/>
<path d="M334.5,263 L344,268"/><path d="M334.5,263 L343.5,259"/><path d="M334.5,263 L339,254"/>
</g>
<circle cx="334.5" cy="263.5" r="3.4" fill="#fbeccc"/>
<path d="M333.5,265.5 Q340,256 354,250.5" stroke="#ecc070" stroke-width="3" fill="none" stroke-linecap="round"/>
<path d="M333.5,265 Q338,258 346,254" stroke="#f4d89a" stroke-width="1.4" fill="none" stroke-linecap="round"/>
<ellipse cx="356.5" cy="250" rx="3.2" ry="1.7" transform="rotate(-12 356.5 250)" fill="#d0606a"/>
</g>
<rect x="184.5" y="130.5" width="242" height="186" fill="none" stroke="#8ca3dd" stroke-width="1"/>
<g fill="#eef3fd" stroke="#93a8e0" stroke-width="0.9">
<rect x="182.5" y="128.5" width="4" height="4"/><rect x="303.5" y="128.5" width="4" height="4"/><rect x="424.5" y="128.5" width="4" height="4"/>
<rect x="182.5" y="221.5" width="4" height="4"/><rect x="424.5" y="221.5" width="4" height="4"/>
<rect x="182.5" y="314.5" width="4" height="4"/><rect x="303.5" y="314.5" width="4" height="4"/><rect x="424.5" y="314.5" width="4" height="4"/>
</g>
</svg>
</div></body></html>
